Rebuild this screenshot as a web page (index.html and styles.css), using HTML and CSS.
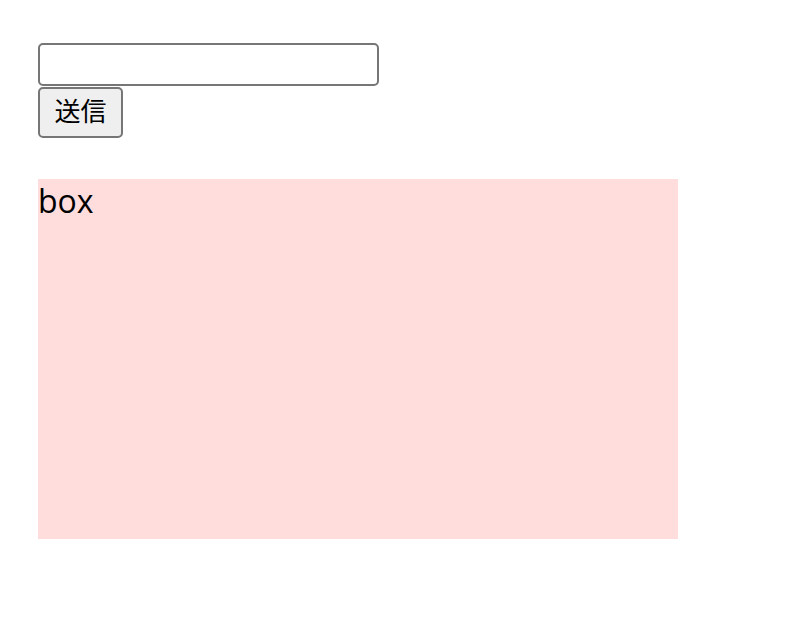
FILE: index.html
```html
<!DOCTYPE html>
<html lang="ja">
<head>
<meta charset="utf-8">
<link rel="stylesheet" href="styles.css">
</head>
<body>
<form class="form">
  <input class="field" type="text">
  <button class="send" type="button">送信</button>
</form>
<div class="box">box</div>
</body>
</html>
```
FILE: styles.css
```css
html, body { margin: 0; padding: 0; background: #fff; }
body {
  padding: 43px 0 0 38px;
  font-family: "Open Sans", "Noto Sans CJK JP", sans-serif;
  color: #000;
}
.form {
  display: flex;
  flex-direction: column;
  align-items: flex-start;
  gap: 0;
  margin: 0;
}
.field {
  display: block;
  box-sizing: border-box;
  width: 341px;
  height: 43px;
  border: 2px solid #767676;
  border-radius: 5px;
  background: #fff;
  margin: 0 0 1px 0;
  padding: 0 6px;
  font-size: 24px;
}
.send {
  display: block;
  box-sizing: border-box;
  width: 85px;
  height: 51px;
  border: 2px solid #767676;
  border-radius: 5px;
  background: #efefef;
  margin: 0;
  padding: 0 0 6px 0;
  font-family: "Noto Sans CJK JP", sans-serif;
  font-size: 26px;
  color: #000;
  line-height: 1;
}
.box {
  margin-top: 41px;
  width: 640px;
  height: 360px;
  background: #ffdddd;
  font-size: 32px;
  line-height: 43px;
}
```
